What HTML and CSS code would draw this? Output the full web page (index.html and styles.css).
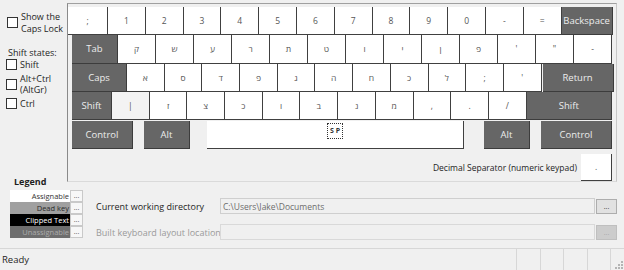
FILE: index.html
```html
<!DOCTYPE html>
<html lang="en">
<head>
    <meta charset="UTF-8">
    <title>Keyboard Layout Creator</title>
    <link rel="stylesheet" href="styles.css">
</head>
<body>
<div class="window">
    <div class="top">
        <div class="side">
            <label class="check check-caps"><span class="box"></span><span>Show the<br>Caps Lock</span></label>
            <div class="states-title">Shift states:</div>
            <label class="check check-shift"><span class="box"></span><span>Shift</span></label>
            <label class="check check-alt"><span class="box"></span><span>Alt+Ctrl<br>(AltGr)</span></label>
            <label class="check check-ctrl"><span class="box"></span><span>Ctrl</span></label>
        </div>

        <div class="keyboard">
            <div class="row row-first">
                <div class="key semi">;</div>
                <div class="key">1</div>
                <div class="key">2</div>
                <div class="key">3</div>
                <div class="key">4</div>
                <div class="key">5</div>
                <div class="key">6</div>
                <div class="key">7</div>
                <div class="key">8</div>
                <div class="key">9</div>
                <div class="key">0</div>
                <div class="key">-</div>
                <div class="key">=</div>
                <div class="key dark backspace">Backspace</div>
            </div>
            <div class="row">
                <div class="key dark tab">Tab</div>
                <div class="key wide">ק</div>
                <div class="key wide">ש</div>
                <div class="key wide">ע</div>
                <div class="key wide">ר</div>
                <div class="key wide">ת</div>
                <div class="key wide">ט</div>
                <div class="key wide">ו</div>
                <div class="key wide">י</div>
                <div class="key wide">ן</div>
                <div class="key wide">פ</div>
                <div class="key wide">'</div>
                <div class="key wide">"</div>
                <div class="key wide">-</div>
            </div>
            <div class="row">
                <div class="key dark caps">Caps</div>
                <div class="key mid">א</div>
                <div class="key mid">ס</div>
                <div class="key mid">ד</div>
                <div class="key mid">פ</div>
                <div class="key mid">ג</div>
                <div class="key mid">ה</div>
                <div class="key mid">ח</div>
                <div class="key mid">כ</div>
                <div class="key mid">ל</div>
                <div class="key mid">;</div>
                <div class="key mid">'</div>
                <div class="key dark return">Return</div>
            </div>
            <div class="row">
                <div class="key dark lshift">Shift</div>
                <div class="key mid selected">|</div>
                <div class="key mid">ז</div>
                <div class="key mid">צ</div>
                <div class="key mid">כ</div>
                <div class="key mid">ו</div>
                <div class="key mid">ב</div>
                <div class="key mid">נ</div>
                <div class="key mid">מ</div>
                <div class="key mid">,</div>
                <div class="key mid">.</div>
                <div class="key mid">/</div>
                <div class="key dark rshift">Shift</div>
            </div>
            <div class="row row-last">
                <div class="key dark lctrl">Control</div>
                <div class="key dark lalt">Alt</div>
                <div class="key space"><span class="sp">S P</span></div>
                <div class="key dark ralt">Alt</div>
                <div class="key dark rctrl">Control</div>
            </div>
            <div class="decimal-row">
                <span class="decimal-label">Decimal Separator (numeric keypad)</span>
                <div class="key decimal">.</div>
            </div>
        </div>
    </div>

    <div class="bottom">
        <div class="legend">
            <div class="legend-title">Legend</div>
            <div class="legend-item"><span class="swatch assignable">Assignable</span><span class="dots">...</span></div>
            <div class="legend-item"><span class="swatch dead">Dead key</span><span class="dots">...</span></div>
            <div class="legend-item"><span class="swatch clipped">Clipped Text</span><span class="dots">...</span></div>
            <div class="legend-item"><span class="swatch unassignable">Unassignable</span><span class="dots">...</span></div>
        </div>
        <div class="fields">
            <div class="field">
                <span class="field-label">Current working directory</span>
                <input class="field-input" type="text" value="C:\Users\Jake\Documents" readonly>
                <button class="browse">...</button>
            </div>
            <div class="field disabled">
                <span class="field-label">Built keyboard layout location</span>
                <input class="field-input" type="text" value="" disabled>
                <button class="browse" disabled>...</button>
            </div>
        </div>
    </div>

    <div class="statusbar">
        <span class="status-text">Ready</span>
        <span class="status-cell"></span>
        <span class="status-cell"></span>
        <span class="status-cell"></span>
        <span class="status-cell"></span>
        <span class="status-grip">
            <svg width="12" height="12" viewBox="0 0 12 12">
                <rect x="9" y="3" width="2" height="2" fill="#b4b4b4"/>
                <rect x="6" y="6" width="2" height="2" fill="#b4b4b4"/>
                <rect x="9" y="6" width="2" height="2" fill="#b4b4b4"/>
                <rect x="3" y="9" width="2" height="2" fill="#b4b4b4"/>
                <rect x="6" y="9" width="2" height="2" fill="#b4b4b4"/>
                <rect x="9" y="9" width="2" height="2" fill="#b4b4b4"/>
            </svg>
        </span>
    </div>
</div>
</body>
</html>
```

FILE: styles.css
```css
* {
    box-sizing: border-box;
}
body {
    margin: 0;
    background-color: #f0f0f0;
    font-family: "Open Sans", "Noto Sans", "DejaVu Sans", sans-serif;
    font-size: 8.5px;
    color: #1e1e1e;
}
.window {
    width: 624px;
    height: 270px;
    display: flex;
    flex-direction: column;
    overflow: hidden;
}

/* top area: options + keyboard */
.top {
    display: flex;
    height: 182px;
}
.side {
    width: 67px;
    padding: 11px 0 0 6px;
    display: flex;
    flex-direction: column;
    align-items: flex-start;
    font-size: 9px;
}
.check {
    display: flex;
    align-items: center;
    gap: 3px;
    line-height: 11.5px;
}
.check .box {
    width: 11px;
    height: 11px;
    background-color: #fff;
    border: 1px solid #333;
    flex: none;
}
.check-caps {
    margin-left: 1px;
}
.states-title {
    margin: 13px 0 0 2px;
    line-height: 11px;
}
.check-shift {
    margin-top: 1px;
}
.check-alt {
    margin-top: 2px;
}
.check-ctrl {
    margin-top: 2px;
}

.keyboard {
    width: 550px;
    margin-top: 3px;
    border-top: 1px solid #a0a0a0;
    border-left: 1px solid #8a8a8a;
    border-right: 1px solid #c8c8c8;
    border-bottom: 1px solid #dadada;
    padding: 3px 4px 0 0;
    display: flex;
    flex-direction: column;
}
.row {
    display: flex;
    height: 28.25px;
    padding-left: 4px;
}
.row-first {
    padding-left: 0;
}
.key {
    flex: none;
    height: 100%;
    width: 37.7px;
    background-color: #fff;
    border-right: 1px solid #404040;
    border-bottom: 1px solid #404040;
    display: flex;
    align-items: center;
    justify-content: center;
    color: #555;
    font-size: 8.5px;
}
.row-first .key { width: 37.8px; }
.row-first .key.semi { width: 40px; }
.key.wide { width: 38px; }
.key.mid { width: 37.7px; }
.key.selected { background-color: #f3f3f3; }

.key.dark {
    background-color: #666;
    border-color: #3c3c3c;
    color: #ececec;
    font-size: 9.5px;
}
.row-first .key.backspace { width: 51px; }
.key.tab { width: 46px; }
.key.caps { width: 55px; }
.key.return { width: 71px; margin-left: 1px; }
.key.lshift { width: 40px; }
.key.rshift { width: 85.5px; }

.row-last {
    margin-top: 0.5px;
}
.key.lctrl { width: 61px; }
.key.lalt { width: 46px; margin-left: 11px; }
.key.space {
    width: 257px;
    margin-left: 17px;
    align-items: flex-start;
    padding-top: 2px;
}
.key.ralt { width: 46px; margin-left: 20px; }
.key.rctrl { width: 71px; margin-left: 11px; }
.sp {
    border: 1px dotted #333;
    padding: 2px 2px;
    font-size: 7px;
    font-weight: bold;
    color: #333;
    line-height: 10px;
}

.decimal-row {
    display: flex;
    justify-content: flex-end;
    align-items: center;
    margin-top: 5px;
    height: 27px;
}
.decimal-label {
    margin-right: 4px;
    white-space: nowrap;
}
.key.decimal {
    width: 31px;
    height: 27px;
}

/* bottom area: legend + paths */
.bottom {
    display: flex;
    height: 67px;
    border-bottom: 1px solid #d7d7d7;
}
.legend {
    width: 83px;
    padding-left: 10px;
    margin-top: -6px;
}
.legend-title {
    font-weight: bold;
    font-size: 9px;
    margin-left: 4px;
    line-height: 12px;
    height: 14px;
}
.legend-item {
    display: flex;
    height: 12px;
}
.swatch {
    width: 60px;
    text-align: right;
    font-size: 7.5px;
    line-height: 12px;
    padding-right: 1px;
    white-space: nowrap;
    overflow: hidden;
}
.swatch.assignable { background-color: #fff; color: #333; }
.swatch.dead { background-color: #a0a0a0; color: #2a2a2a; }
.swatch.clipped { background-color: #000; color: #fff; }
.swatch.unassignable { background-color: #6e6e6e; color: #acacac; }
.dots {
    width: 13px;
    height: 12px;
    background-color: #f7f7f7;
    border: 1px solid #c9c9c9;
    font-size: 7px;
    line-height: 9px;
    text-align: center;
    color: #555;
}

.fields {
    flex: 1;
    margin-left: 13px;
    padding-top: 16px;
    padding-right: 7px;
}
.field {
    display: flex;
    align-items: center;
    height: 16px;
    margin-bottom: 10px;
}
.field-label {
    width: 124px;
    flex: none;
    white-space: nowrap;
    font-size: 9px;
}
.field-input {
    flex: 1;
    height: 16px;
    min-width: 0;
    margin: 0;
    padding: 0 2px;
    border: 1px solid #cfcfcf;
    background-color: #f0f0f0;
    font-family: inherit;
    font-size: 8.5px;
    color: #6d6d6d;
}
.browse {
    width: 21px;
    height: 15px;
    margin-left: 1px;
    padding: 0;
    border: 1px solid #adadad;
    background-color: #e1e1e1;
    font-family: inherit;
    font-size: 7px;
    color: #333;
}
.field.disabled .field-label {
    color: #9a9a9a;
}
.field.disabled .field-input {
    border-color: #d9d9d9;
}
.field.disabled .browse {
    background-color: #cccccc;
    border-color: #bfbfbf;
    color: #a8a8a8;
}

/* status bar */
.statusbar {
    flex: 1;
    display: flex;
    align-items: stretch;
}
.status-text {
    flex: 1;
    padding-left: 2px;
    display: flex;
    align-items: center;
    font-size: 9.5px;
}
.status-cell {
    width: 23.5px;
    border-left: 1px solid #d7d7d7;
}
.status-grip {
    width: 14px;
    border-left: 1px solid #d7d7d7;
    display: flex;
    align-items: flex-end;
    justify-content: flex-end;
}
```
